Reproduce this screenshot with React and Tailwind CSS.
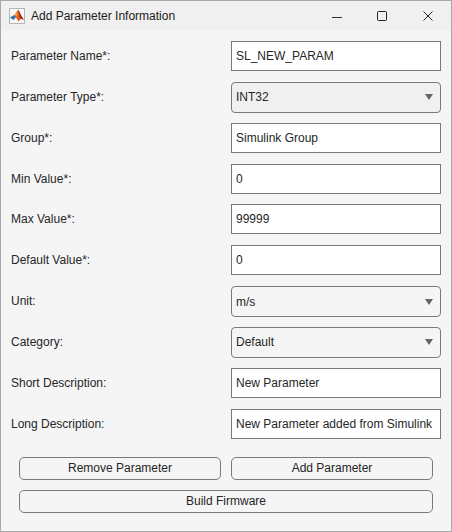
const fields = [
  { label: "Parameter Name*:", value: "SL_NEW_PARAM" },
  { label: "Parameter Type*:", value: "INT32", select: true, tint: true },
  { label: "Group*:", value: "Simulink Group" },
  { label: "Min Value*:", value: "0" },
  { label: "Max Value*:", value: "99999" },
  { label: "Default Value*:", value: "0" },
  { label: "Unit:", value: "m/s", select: true },
  { label: "Category:", value: "Default", select: true },
  { label: "Short Description:", value: "New Parameter" },
  { label: "Long Description:", value: "New Parameter added from Simulink" },
];

function MatlabIcon() {
  return (
    <div className="w-[16px] h-[16px] border border-[#b5b5b5] bg-[#f8f8f8] flex items-center justify-center">
      <svg width="14" height="14" viewBox="0 0 14 14">
        <path d="M0 8.5 L4 6 L6.5 7.5 L3.5 11 Z" fill="#2f6fb0" />
        <path d="M4 6.5 L8 1 C9 1 10.5 6 14 11 C12 10 11 9 10 10.5 L8.5 13 C7.5 10 6 8 4 6.5 Z" fill="#e0601e" />
        <path d="M8 1 C9 1 10.5 6 14 11 C12 10 11 9 10 10.5 C9.5 7 9 4 8 1 Z" fill="#a32a14" />
        <path d="M4.5 6.5 L7.5 2.5 L7 7.5 Z" fill="#f2a62e" />
      </svg>
    </div>
  );
}

function Row({ label, value, select, tint }) {
  return (
    <div className="flex items-start h-[30px] mb-[10.85px]">
      <div className="w-[230px] h-[30px] flex items-center pl-[10px] text-[12px] text-[#262626]">{label}</div>
      {select ? (
        <div className={"w-[210px] h-[31px] border border-[#7a7a7a] rounded-[4px] flex items-center justify-between pl-[4px] pr-[7px] text-[12px] text-[#262626] " + (tint ? "bg-[#f0f0f0]" : "bg-[#f5f5f5]")}>
          <span>{value}</span>
          <span className="w-0 h-0 border-l-[4.5px] border-r-[4.5px] border-t-[6px] border-l-transparent border-r-transparent border-t-[#666666]" />
        </div>
      ) : (
        <div className="w-[210px] h-[30px] bg-white border border-[#7a7a7a] flex items-center pl-[4px] text-[12px] text-[#262626] whitespace-nowrap">
          {value}
        </div>
      )}
    </div>
  );
}

function Btn({ children, className }) {
  return (
    <button className={"h-[23px] bg-[#f5f5f5] border border-[#7a7a7a] rounded-[5px] text-[12px] text-[#262626] flex items-center justify-center " + className}>
      {children}
    </button>
  );
}

export default function App() {
  return (
    <div className="w-[452px] h-[532px] bg-[#f5f5f5] border border-[#a8a8a8] flex flex-col font-['Liberation_Sans',Arial,sans-serif]">
      <div className="h-[30px] bg-[#f0f0f0] flex items-center shrink-0">
        <div className="ml-[8px] mr-[6px]">
          <MatlabIcon />
        </div>
        <div className="text-[12px] text-[#1a1a1a] grow">Add Parameter Information</div>
        <svg width="10" height="1" viewBox="0 0 10 1" className="mr-[35px] mt-[3px]">
          <rect width="10" height="1" fill="#333333" />
        </svg>
        <svg width="10" height="10" viewBox="0 0 10 10" className="mr-[36px]">
          <rect x="0.5" y="0.5" width="9" height="9" rx="1" fill="none" stroke="#222222" />
        </svg>
        <svg width="10" height="10" viewBox="0 0 10 10" className="mr-[18px]">
          <path d="M0.5 0.5 L9.5 9.5 M9.5 0.5 L0.5 9.5" stroke="#222222" fill="none" />
        </svg>
      </div>
      <div className="pt-[10px]">
        {fields.map((f) => (
          <Row key={f.label} {...f} />
        ))}
      </div>
      <div className="flex gap-[10px] pl-[18px] mt-[7.5px]">
        <Btn className="w-[202px]">Remove Parameter</Btn>
        <Btn className="w-[202px]">Add Parameter</Btn>
      </div>
      <div className="pl-[18px] mt-[10px]">
        <Btn className="w-[414px]">Build Firmware</Btn>
      </div>
    </div>
  );
}
